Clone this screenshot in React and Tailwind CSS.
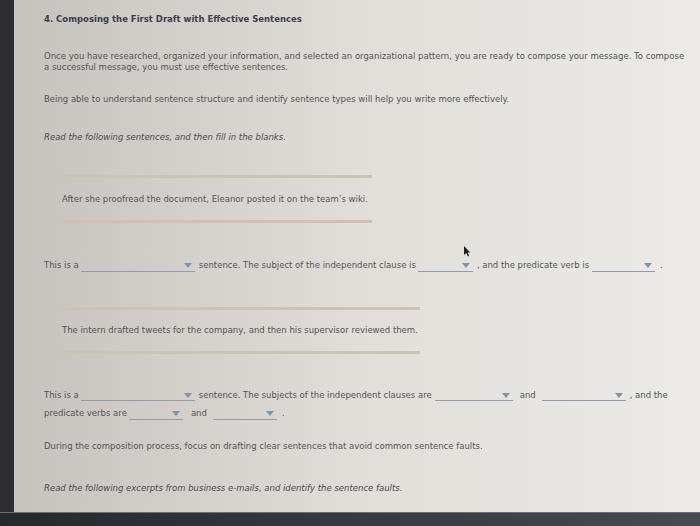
import React from "react";

const font = { fontFamily: '"DejaVu Sans", Verdana, sans-serif' };

function Drop({ w }) {
  return (
    <span className={`inline-flex h-[11px] items-center justify-end border-b border-[#8e9cb1] pr-[3px] ${w}`}>
      <svg width="8" height="5" viewBox="0 0 8 5">
        <path d="M0 0 L8 0 L4 5 Z" fill="#7f93ad" />
      </svg>
    </span>
  );
}

function Rule({ w }) {
  return <div className={`h-[3px] bg-[#cdc3b0] ${w}`} />;
}

export default function App() {
  return (
    <div className="flex h-[526px] w-[700px] flex-col overflow-hidden bg-[#2a2c30]" style={font}>
      <div className="flex h-[512px]">
        <div className="w-[14px] bg-[#2b2d32]" />
        <div className="relative flex-1 bg-linear-to-r from-[#c6c2be] via-[#e1ded9] to-[#ecebe8] pl-[30px] pt-[14px] text-[8.5px] leading-[11px] text-[#545456]">
          <h1 className="font-bold text-[#3c3e4a]">4. Composing the First Draft with Effective Sentences</h1>

          <p className="mt-[26px] w-[642px]">
            Once you have researched, organized your information, and selected an organizational pattern, you are ready to compose your message. To compose a successful message, you must use effective sentences.
          </p>

          <p className="mt-[21px]">Being able to understand sentence structure and identify sentence types will help you write more effectively.</p>

          <p className="mt-[27px] italic text-[#4a4a4e]">Read the following sentences, and then fill in the blanks.</p>

          <div className="pl-[18px]">
            <div className="mt-[32px]"><Rule w="w-[310px]" /></div>
            <p className="mt-[16px]">After she proofread the document, Eleanor posted it on the team’s wiki.</p>
            <div className="mt-[15px]"><Rule w="w-[310px]" /></div>
          </div>

          <div className="mt-[37px] flex items-center whitespace-nowrap">
            <span>This is a</span>
            <span className="ml-[2px]"><Drop w="w-[114px]" /></span>
            <span className="ml-[4px]">sentence. The subject of the independent clause is</span>
            <span className="ml-[2px]"><Drop w="w-[55px]" /></span>
            <span className="ml-[4px]">, and the predicate verb is</span>
            <span className="ml-[3px]"><Drop w="w-[63px]" /></span>
            <span className="ml-[5px]">.</span>
          </div>

          <div className="pl-[18px]">
            <div className="mt-[35px]"><Rule w="w-[358px]" /></div>
            <p className="mt-[15px]">The intern drafted tweets for the company, and then his supervisor reviewed them.</p>
            <div className="mt-[15px]"><Rule w="w-[358px]" /></div>
          </div>

          <div className="mt-[36px] flex items-center whitespace-nowrap">
            <span>This is a</span>
            <span className="ml-[2px]"><Drop w="w-[114px]" /></span>
            <span className="ml-[4px]">sentence. The subjects of the independent clauses are</span>
            <span className="ml-[3px]"><Drop w="w-[78px]" /></span>
            <span className="ml-[7px]">and</span>
            <span className="ml-[6px]"><Drop w="w-[84px]" /></span>
            <span className="ml-[4px]">, and the</span>
          </div>
          <div className="mt-[7px] flex items-center whitespace-nowrap">
            <span>predicate verbs are</span>
            <span className="ml-[2px]"><Drop w="w-[54px]" /></span>
            <span className="ml-[8px]">and</span>
            <span className="ml-[6px]"><Drop w="w-[64px]" /></span>
            <span className="ml-[5px]">.</span>
          </div>

          <p className="mt-[21px]">During the composition process, focus on drafting clear sentences that avoid common sentence faults.</p>

          <p className="mt-[31px] italic text-[#4a4a4e]">Read the following excerpts from business e-mails, and identify the sentence faults.</p>

          <svg className="absolute left-[449px] top-[245px]" width="8" height="12" viewBox="0 0 8 12">
            <path d="M1 1 L1 10 L3.2 8 L5 11.5 L6.2 11 L4.5 7.5 L7.2 7.5 Z" fill="#1e1f24" />
          </svg>
        </div>
      </div>
      <div className="h-[14px] border-t border-[#6a6e74] bg-linear-to-r from-[#26282c] to-[#474b51]" />
    </div>
  );
}
